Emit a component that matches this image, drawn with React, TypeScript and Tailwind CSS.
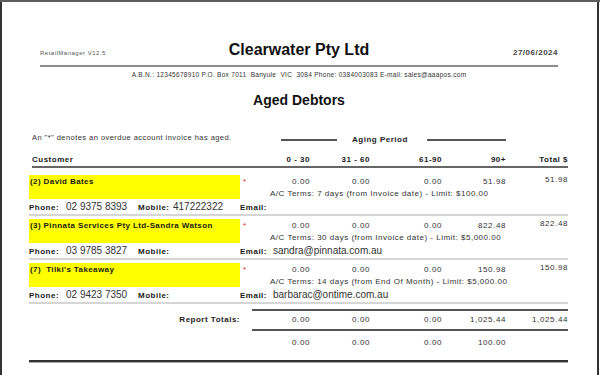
import React from 'react';

interface Debtor {
    name: string;
    cols: string[];
    total: string;
    terms: string;
    phone: string;
    mobile: string;
    email: string;
}

const debtors: Debtor[] = [
    {
        name: '(2) David Bates',
        cols: ['0.00', '0.00', '0.00', '51.98'],
        total: '51.98',
        terms: 'A/C Terms: 7 days (from Invoice date) - Limit: $100.00',
        phone: '02 9375 8393',
        mobile: '417222322',
        email: '',
    },
    {
        name: '(3) Pinnata Services Pty Ltd-Sandra Watson',
        cols: ['0.00', '0.00', '0.00', '822.48'],
        total: '822.48',
        terms: 'A/C Terms: 30 days (from Invoice date) - Limit: $5,000.00',
        phone: '03 9785 3827',
        mobile: '',
        email: 'sandra@pinnata.com.au',
    },
    {
        name: "(7)  Tilki's Takeaway",
        cols: ['0.00', '0.00', '0.00', '150.98'],
        total: '150.98',
        terms: 'A/C Terms: 14 days (from End Of Month) - Limit: $5,000.00',
        phone: '02 9423 7350',
        mobile: '',
        email: 'barbarac@ontime.com.au',
    },
];

// right hand part of a row: asterisk col + 4 aging cols + total
function AmountCols({ cols, total, star, raiseTotal }: { cols: string[]; total?: string; star?: boolean; raiseTotal?: boolean }) {
    return (
        <div className="grid grid-cols-[70px_60px_72px_64px_62px] text-[8px] leading-[10px] tracking-[0.6px] text-[#333]">
            <div className="flex justify-between pt-[2px]">
                <span className="pl-[3px] text-[#e0201b]">{star ? '*' : ''}</span>
                <span>{cols[0]}</span>
            </div>
            <div className="text-right pt-[2px]">{cols[1]}</div>
            <div className="text-right pt-[2px]">{cols[2]}</div>
            <div className="text-right pt-[2px]">{cols[3]}</div>
            <div className={raiseTotal ? 'text-right' : 'text-right pt-[2px]'}>{total}</div>
        </div>
    );
}

function DebtorBlock({ d, first }: { d: Debtor; first?: boolean }) {
    return (
        <div className={first ? 'mt-[7px]' : 'mt-[3px]'}>
            <div className="flex h-[24px]">
                <div className="w-[211px] h-[24px] bg-[#ffff00] pl-[1px] pt-[2px] text-[8px] leading-[10px] font-bold tracking-[0.4px] text-[#1a1a1a] whitespace-pre">
                    {d.name}
                </div>
                <div className="w-[328px]">
                    <AmountCols cols={d.cols} total={d.total} star raiseTotal />
                    <div className="pl-[30px] mt-[2px] text-[8px] leading-[10px] tracking-[0.5px] text-[#333] whitespace-nowrap">
                        {d.terms}
                    </div>
                </div>
            </div>
            <div className="flex items-baseline mt-[3px] h-[10px] leading-[10px] text-[#1a1a1a] overflow-hidden">
                <span className="w-[37px] text-[8px] font-bold tracking-[0.5px]">Phone:</span>
                <span className="w-[72px] text-[10px] text-[#333]">{d.phone}</span>
                <span className="w-[35px] text-[8px] font-bold tracking-[0.5px]">Mobile:</span>
                <span className="w-[67px] text-[10px] text-[#333]">{d.mobile}</span>
                <span className="w-[33px] text-[8px] font-bold tracking-[0.5px]">Email:</span>
                <span className="text-[10px] text-[#333]">{d.email}</span>
            </div>
            <div className="mt-[2px] h-[2px] bg-[#d6d6d6]" />
        </div>
    );
}

export default function App() {
    return (
        <div className="w-[600px] h-[375px] overflow-hidden bg-white border-t-2 border-[#5c5c5c] font-['Liberation_Sans',Arial,sans-serif]">
            <div className="w-[599px] h-full border-l-2 border-r-2 border-[#333]">
                {/* report header */}
                <div className="ml-[38px] w-[518px] pt-[39px]">
                    <div className="grid grid-cols-[1fr_auto_1fr] items-baseline h-[18px]">
                        <span className="text-[6px] tracking-[0.5px] text-[#555]">RetailManager V12.5</span>
                        <span className="text-[16px] leading-[18px] font-bold text-[#111]">Clearwater Pty Ltd</span>
                        <span className="text-right text-[8px] font-bold tracking-[0.5px] text-[#444]">27/06/2024</span>
                    </div>
                    <div className="mt-[6px] h-[2px] bg-[#8c8c8c]" />
                    <div className="mt-[4px] text-center text-[6.5px] leading-[8px] tracking-[0.3px] text-[#333] whitespace-pre">
                        A.B.N.: 12345678910 P.O. Box 7011  Banyule  VIC  3084 Phone: 0384003083 E-mail: sales@aaapos.com
                    </div>
                    <div className="mt-[13px] text-center text-[14px] leading-[16px] font-bold text-[#111]">Aged Debtors</div>
                </div>

                <div className="ml-[27px] w-[539px]">
                    {/* note + aging period */}
                    <div className="mt-[24px] flex items-center h-[12px]">
                        <div className="w-[252px] pl-[3px] text-[7.5px] tracking-[0.45px] text-[#333] whitespace-nowrap">
                            An "*" denotes an overdue account invoice has aged.
                        </div>
                        <div className="flex items-center mt-[3px]">
                            <div className="w-[56px] h-[2px] bg-[#555]" />
                            <span className="ml-[15px] text-[8px] font-bold tracking-[0.5px] text-[#222]">Aging Period</span>
                            <div className="ml-[19px] w-[79px] h-[2px] bg-[#555]" />
                        </div>
                    </div>

                    {/* column headers */}
                    <div className="mt-[11px] grid grid-cols-[221px_60px_60px_72px_64px_62px] h-[10px] text-[8px] leading-[10px] font-bold tracking-[0.5px] text-[#1a1a1a]">
                        <span className="pl-[3px]">Customer</span>
                        <span className="text-right">0 - 30</span>
                        <span className="text-right">31 - 60</span>
                        <span className="text-right">61-90</span>
                        <span className="text-right">90+</span>
                        <span className="text-right">Total $</span>
                    </div>
                    <div className="mt-[1px] ml-[3px] h-[2px] bg-[#666]" />

                    {debtors.map((d, i) => (
                        <DebtorBlock key={d.name} d={d} first={i === 0} />
                    ))}

                    {/* totals */}
                    <div className="mt-[5px] ml-[223px] h-[2px] bg-[#555]" />
                    <div className="mt-[2px] flex h-[12px]">
                        <div className="w-[211px] pt-[2px] text-right text-[8px] leading-[10px] font-bold tracking-[0.5px] text-[#222]">
                            Report Totals:
                        </div>
                        <div className="w-[328px]">
                            <AmountCols cols={['0.00', '0.00', '0.00', '1,025.44']} total="1,025.44" />
                        </div>
                    </div>
                    <div className="mt-[4px] ml-[223px] h-[2px] bg-[#555]" />
                    <div className="mt-[5px] flex h-[12px]">
                        <div className="w-[211px]" />
                        <div className="w-[328px]">
                            <AmountCols cols={['0.00', '0.00', '0.00', '100.00']} />
                        </div>
                    </div>
                    <div className="mt-[12px] h-[2px] bg-[#333]" />
                    <div className="h-[1px] bg-[#aaa]" />
                </div>
            </div>
        </div>
    );
}
